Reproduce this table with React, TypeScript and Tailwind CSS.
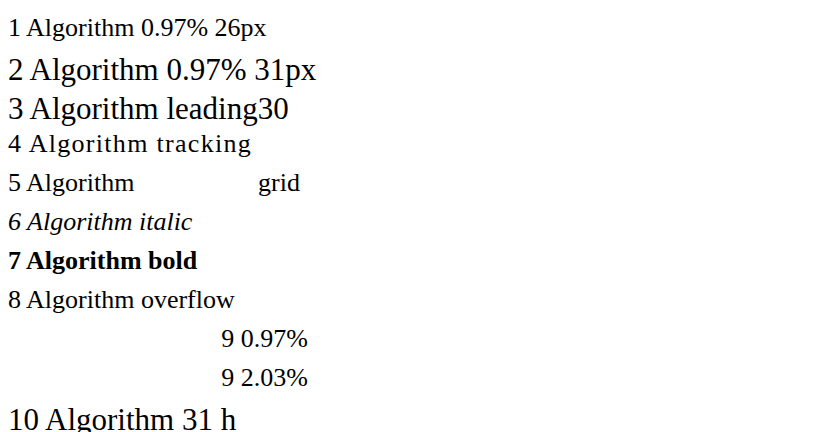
import React from "react";

type Cell = { v: string; b?: boolean };

const cells: Cell[] = [{ v: "0.97%" }, { v: "2.03%", b: true }];

export default function App() {
  return (
    <div className="w-[821px] h-[432px] bg-white text-black text-[26px] p-2">
      <div className="font-['Liberation_Serif']">1 Algorithm 0.97% 26px</div>
      <div className="font-['Liberation_Serif'] text-[31px]">2 Algorithm 0.97% 31px</div>
      <div className="font-['Liberation_Serif'] text-[31px] leading-[30px]">3 Algorithm leading30</div>
      <div className="font-['Liberation_Serif'] tracking-[1.3px]">4 Algorithm tracking</div>
      <div className="font-['Liberation_Serif'] grid grid-cols-[250px_138px]">
        <div>5 Algorithm</div>
        <div>grid</div>
      </div>
      <div className="font-['Liberation_Serif'] italic">6 Algorithm italic</div>
      <div className="font-['Liberation_Serif'] font-bold">7 Algorithm bold</div>
      <div className="font-['Liberation_Serif'] overflow-hidden">8 Algorithm overflow</div>
      {cells.map((c, i) => (
        <div key={i} className="font-['Liberation_Serif'] text-right w-[300px]">
          9 {c.v}
        </div>
      ))}
      <div className="font-['Liberation_Serif'] text-[31px] w-[300px] h-[40px]">10 Algorithm 31 h</div>
    </div>
  );
}
